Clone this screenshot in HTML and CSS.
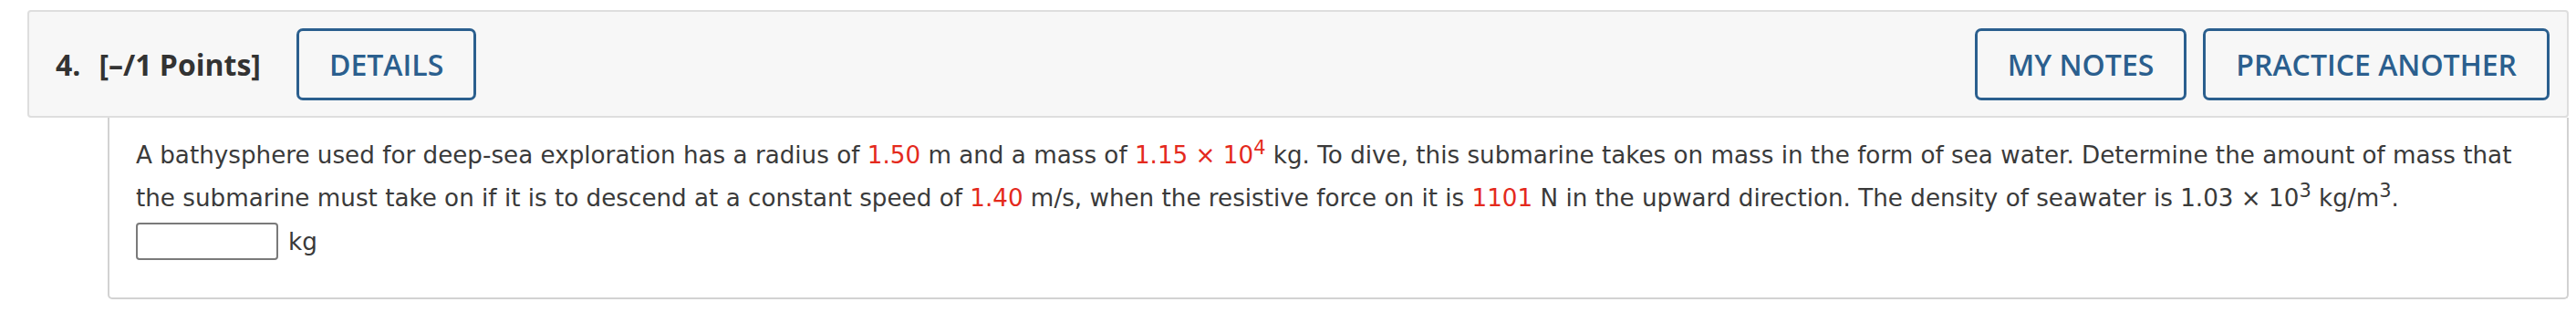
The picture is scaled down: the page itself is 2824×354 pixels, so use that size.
FILE: index.html
```html
<!DOCTYPE html>
<html lang="en">
<head>
    <meta charset="UTF-8">
    <title>Question 4</title>
    <link rel="stylesheet" href="styles.css">
</head>
<body>
    <div class="question">
        <div class="question-header">
            <div class="header-left">
                <span class="q-number">4.</span>
                <span class="q-points">[&ndash;/1 Points]</span>
                <button class="q-btn">DETAILS</button>
            </div>
            <div class="header-right">
                <button class="q-btn">MY NOTES</button>
                <button class="q-btn">PRACTICE ANOTHER</button>
            </div>
        </div>
        <div class="question-body">
            <div class="q-text">
                A bathysphere used for deep-sea exploration has a radius of <span class="val">1.50</span> m and a mass of <span class="val">1.15 &times; 10<sup>4</sup></span> kg. To dive, this submarine takes on mass in the form of sea water. Determine the amount of mass that the submarine must take on if it is to descend at a constant speed of <span class="val">1.40</span> m/s, when the resistive force on it is <span class="val">1101</span> N in the upward direction. The density of seawater is 1.03 &times; 10<sup>3</sup> kg/m<sup>3</sup>.
            </div>
            <div class="answer-row">
                <input type="text" class="answer-input">
                <span class="unit">kg</span>
            </div>
        </div>
    </div>
</body>
</html>
```

FILE: styles.css
```css
body {
    margin: 0;
    padding: 11px 8px 0 30px;
    background: #fff;
    color: #333;
}

.question-header {
    display: flex;
    justify-content: space-between;
    align-items: center;
    height: 114px;
    padding: 0 19px 0 29px;
    background: #f7f7f7;
    border: 2px solid #dedede;
    border-radius: 4px;
    font-family: 'Open Sans', sans-serif;
}

.header-left, .header-right {
    display: flex;
    align-items: center;
}

.header-right {
    gap: 18px;
}

.q-number {
    font-size: 32px;
    font-weight: bold;
    color: #333;
    margin-right: 20px;
}

.q-points {
    font-size: 32px;
    font-weight: bold;
    color: #333;
    margin-right: 39px;
}

.q-btn {
    font-family: 'Open Sans', sans-serif;
    font-size: 32px;
    font-weight: 600;
    line-height: 45px;
    padding: 14px 33px;
    color: #2b5f8e;
    background: #f7f7f7;
    border: 3px solid #2b5f8e;
    border-radius: 7px;
    cursor: pointer;
}

.question-body {
    margin-left: 88px;
    padding: 18px 29px 38px 29px;
    border: 2px solid #d2d2d2;
    border-top: none;
    border-radius: 0 0 5px 5px;
    font-family: 'DejaVu Sans', Verdana, sans-serif;
    font-size: 26.2px;
    color: #3a3a3a;
}

.q-text {
    line-height: 47px;
}

.q-text sup {
    font-size: 0.8em;
    line-height: 0;
}

.val {
    color: #e42a1d;
}

.answer-row {
    display: flex;
    align-items: center;
    gap: 11px;
    height: 47px;
}

.answer-input {
    width: 152px;
    height: 37px;
    padding: 0;
    border: 2px solid #7a7a7a;
    border-radius: 4px;
    box-sizing: content-box;
}
```
